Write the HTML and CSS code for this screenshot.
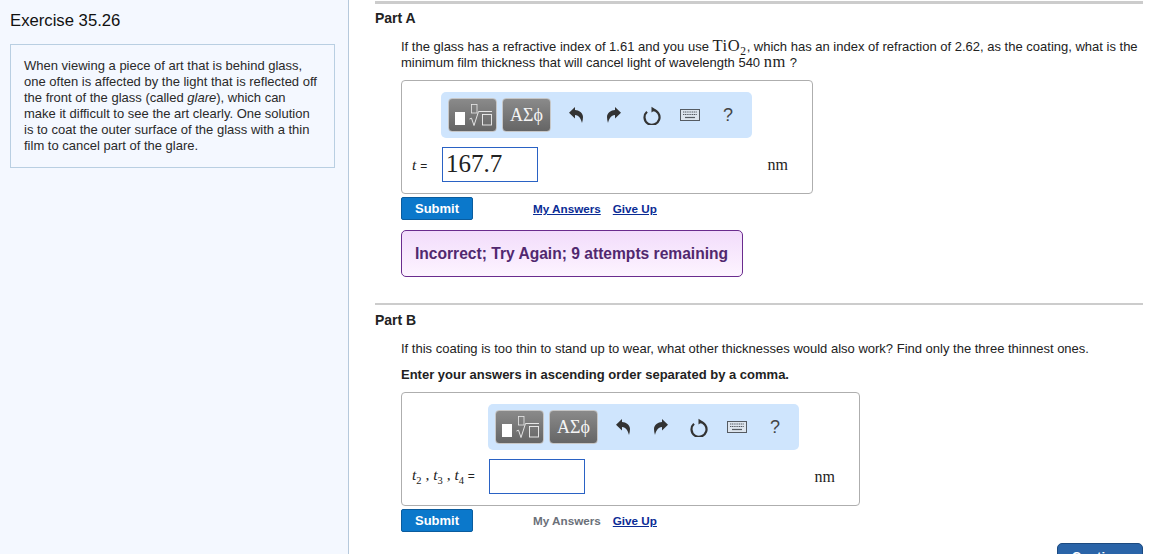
FILE: index.html
```html
<!DOCTYPE html>
<html lang="en">
<head>
<meta charset="utf-8">
<title>Exercise 35.26</title>
<link rel="stylesheet" href="styles.css">
</head>
<body>
<svg class="defs" width="0" height="0" aria-hidden="true">
  <defs>
    <symbol id="i-undo" viewBox="0 0 16 16"><path d="M1 5.700 7 0v3C11 3 15 6 15 10c0 2-.4 4-1 6-1-4-3-8-7-8v3.500z" fill="#333"/></symbol>
    <symbol id="i-redo" viewBox="0 0 16 16"><path d="M15 5.700 9 0v3C5 3 1 6 1 10c0 2 .4 4 1 6 1-4 3-8 7-8v3.500z" fill="#333"/></symbol>
    <symbol id="i-reset" viewBox="0 0 18 20"><path d="M4 6.700A7.500 7.500 0 1 0 9.500 4.800" fill="none" stroke="#333" stroke-width="2.200"/><path d="M8.500 1.700 12.800 4.500 8.500 7.500z" fill="#333"/></symbol>
    <symbol id="i-keys" viewBox="0 0 20 12"><rect x=".5" y=".5" width="19" height="11" fill="#dde5ee" stroke="#555b62"/><path d="M3 3h14M3 5.500h14" stroke="#555b62" stroke-dasharray="1.200 .6" fill="none"/><path d="M5 8.500h10" stroke="#555b62" stroke-width="1.200"/></symbol>
    <symbol id="i-tpl" viewBox="0 0 38 30"><rect x="1" y="12" width="10" height="13" fill="#fff"/><rect x="17.500" y="4.500" width="5.500" height="8.500" fill="none" stroke="#e8e8e8" stroke-width=".8"/><path d="M15.500 19l2-.8 2.500 7.300L24.500 11.500H38" fill="none" stroke="#f0f0f0" stroke-width=".9"/><rect x="28.500" y="14.500" width="9" height="10.500" fill="none" stroke="#f0f0f0" stroke-width=".9"/></symbol>
  </defs>
</svg>
<div class="page">
  <aside class="sidebar">
    <h1 class="title">Exercise 35.26</h1>
    <div class="intro">When viewing a piece of art that is behind glass, one often is affected by the light that is reflected off the front of the glass (called <em>glare</em>), which can make it difficult to see the art clearly. One solution is to coat the outer surface of the glass with a thin film to cancel part of the glare.</div>
  </aside>
  <main class="main">
    <section class="part part-a">
      <h2 class="part-title">Part A</h2>
      <p class="prompt">If the glass has a refractive index of 1.61 and you use <span class="math">TiO<sub>2</sub></span>, which has an index of refraction of 2.62, as the coating, what is the minimum film thickness that will cancel light of wavelength 540 <span class="math">nm</span> ?</p>
      <div class="answer answer-a">
        <div class="toolbar">
          <span class="tool-btn"><svg class="tpl" width="38" height="30"><use href="#i-tpl"/></svg></span>
          <span class="tool-btn greek">ΑΣϕ</span>
          <span class="tool-icon first"><svg width="16" height="16"><use href="#i-undo"/></svg></span>
          <span class="tool-icon"><svg width="16" height="16"><use href="#i-redo"/></svg></span>
          <span class="tool-icon"><svg width="18" height="20"><use href="#i-reset"/></svg></span>
          <span class="tool-icon"><svg width="20" height="12"><use href="#i-keys"/></svg></span>
          <span class="tool-icon help">?</span>
        </div>
        <div class="entry">
          <span class="label"><i>t</i> <span class="eq">=</span></span>
          <span class="field">167.7</span>
          <span class="unit">nm</span>
        </div>
      </div>
      <div class="actions">
        <span class="submit">Submit</span>
        <a class="link" href="#">My Answers</a>
        <a class="link" href="#">Give Up</a>
      </div>
      <div class="feedback">Incorrect; Try Again; 9 attempts remaining</div>
    </section>
    <section class="part part-b">
      <h2 class="part-title">Part B</h2>
      <p class="prompt">If this coating is too thin to stand up to wear, what other thicknesses would also work? Find only the three thinnest ones.</p>
      <p class="prompt strong">Enter your answers in ascending order separated by a comma.</p>
      <div class="answer answer-b">
        <div class="toolbar">
          <span class="tool-btn"><svg class="tpl" width="38" height="30"><use href="#i-tpl"/></svg></span>
          <span class="tool-btn greek">ΑΣϕ</span>
          <span class="tool-icon first"><svg width="16" height="16"><use href="#i-undo"/></svg></span>
          <span class="tool-icon"><svg width="16" height="16"><use href="#i-redo"/></svg></span>
          <span class="tool-icon"><svg width="18" height="20"><use href="#i-reset"/></svg></span>
          <span class="tool-icon"><svg width="20" height="12"><use href="#i-keys"/></svg></span>
          <span class="tool-icon help">?</span>
        </div>
        <div class="entry">
          <span class="label"><i>t</i><sub>2</sub> , <i>t</i><sub>3</sub> , <i>t</i><sub>4</sub> <span class="eq">=</span></span>
          <span class="field"></span>
          <span class="unit">nm</span>
        </div>
      </div>
      <div class="actions">
        <span class="submit">Submit</span>
        <span class="link muted">My Answers</span>
        <a class="link" href="#">Give Up</a>
      </div>
    </section>
    <div class="continue-row"><span class="continue">Continue</span></div>
  </main>
</div>
</body>
</html>
```
FILE: styles.css
```css
* { box-sizing: border-box; }
html, body { margin: 0; height: 554px; overflow: hidden; background: #fff; }
body { font-family: "Liberation Sans", Arial, sans-serif; font-size: 13px; color: #222; }
.defs { position: absolute; }
.page { display: flex; height: 554px; overflow: hidden; }

.sidebar { width: 349px; flex: none; background: #f4f8ff; border-right: 1px solid #b6c9dc; padding: 11px 13px 0 10px; }
.title { margin: 0 0 14px; font-size: 16.7px; line-height: 19px; font-weight: 400; color: #111; }
.intro { border: 1px solid #b9cfe2; padding: 13px 16px 13px 13px; font-size: 13px; line-height: 16px; color: #2a2a2a; height: 124px; }

.main { width: 768px; margin-left: 26px; flex: none; }
.part-a { border-top: 3px solid #cccccc; margin-top: 1px; height: 302px; }
.part-b { border-top: 2px solid #cccccc; height: 240px; }
.part-title { margin: 0; font-size: 14px; line-height: 16px; font-weight: 700; color: #222; }
.part-a .part-title { padding-top: 6px; }
.part-b .part-title { padding-top: 7px; }
.prompt { margin: 0 0 0 26px; line-height: 16px; font-size: 13px; color: #222; }
.part-a .prompt { margin-top: 13px; }
.part-b .prompt { margin-top: 13px; }
.part-b .prompt.strong { margin-top: 10px; font-weight: 700; }
.math { font-family: "Liberation Serif", serif; font-size: 16.5px; line-height: 0; letter-spacing: .6px; }
.math sub { font-size: 11.500px; line-height: 0; }

.answer { margin-left: 26px; border: 1px solid #aeaeae; border-radius: 4px; height: 114px; padding-top: 11px; position: relative; background: #fff; }
.answer-a { width: 412px; margin-top: 9px; }
.answer-b { width: 459px; margin-top: 9px; }
.toolbar { display: flex; align-items: center; width: 311px; height: 46px; background: #cfe5fd; border-radius: 5px; padding-left: 7px; gap: 5px; }
.answer-a .toolbar { margin-left: 39px; }
.answer-b .toolbar { margin-left: 86px; }
.tool-btn { display: flex; align-items: center; justify-content: center; flex: none; width: 49px; height: 34px; border: 1px solid #c6c6c6; border-radius: 4px; background: linear-gradient(#8a8a8a, #656565); color: #fff; }
.greek { font-family: "Liberation Serif", serif; font-size: 18px; color: #f4f4f4; }
.tool-icon { display: flex; align-items: center; justify-content: center; flex: none; width: 38px; height: 34px; margin-left: -5px; }
.tool-icon.first { margin-left: 0; width: 39px; }
.help { font-size: 18px; color: #444; }

.entry { display: flex; align-items: center; height: 35px; margin-top: 9px; }
.label { flex: none; padding-left: 10px; font-family: "Liberation Serif", serif; font-size: 15.500px; color: #222; white-space: nowrap; }
.label sub { font-size: 10.500px; }
.eq { font-family: "Liberation Sans", sans-serif; font-size: 12px; }
.answer-a .label { width: 40px; }
.answer-b .label { width: 87px; }
.field { flex: none; width: 96px; height: 35px; border: 1px solid #2a62c4; padding-left: 3px; font-family: "Liberation Serif", serif; font-size: 25px; line-height: 32px; color: #222; background: #fff; }
.unit { margin-left: auto; padding-right: 24px; font-family: "Liberation Serif", serif; font-size: 16px; color: #222; }

.actions { display: flex; align-items: center; margin: 3px 0 0 26px; height: 23px; }
.submit { flex: none; width: 72px; height: 23px; line-height: 21px; text-align: center; font-weight: 700; font-size: 13px; color: #fff; background: #0b78cb; border: 1px solid #0a5c9e; border-radius: 2px; margin-right: 60px; }
.link { font-size: 11.700px; font-weight: 700; color: #0b2c95; text-decoration: underline; margin-right: 12px; }
.link.muted { color: #6b7079; text-decoration: none; }

.feedback { margin: 10px 0 0 26px; width: 342px; height: 47px; line-height: 45px; padding-left: 13px; font-size: 15.600px; font-weight: 700; color: #51286f; border: 1px solid #6a2c8e; border-radius: 5px; background: linear-gradient(#f2dcfb, #fdf4ff); }

.continue-row { display: flex; justify-content: flex-end; }
.continue { width: 86px; height: 26px; line-height: 26px; text-align: center; font-weight: 700; font-size: 13px; color: #fff; background: #2a64a8; border: 1px solid #1c4a80; border-radius: 5px; }
```
